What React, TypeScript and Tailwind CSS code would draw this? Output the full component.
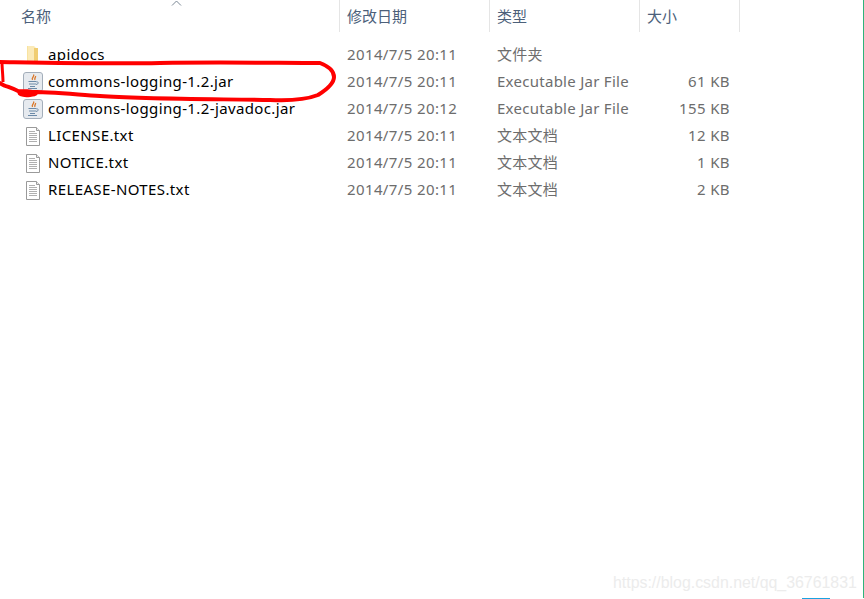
const files = [
  { name: "apidocs", date: "2014/7/5 20:11", type: "文件夹", size: "", icon: "folder" },
  { name: "commons-logging-1.2.jar", date: "2014/7/5 20:11", type: "Executable Jar File", size: "61 KB", icon: "jar" },
  { name: "commons-logging-1.2-javadoc.jar", date: "2014/7/5 20:12", type: "Executable Jar File", size: "155 KB", icon: "jar" },
  { name: "LICENSE.txt", date: "2014/7/5 20:11", type: "文本文档", size: "12 KB", icon: "txt" },
  { name: "NOTICE.txt", date: "2014/7/5 20:11", type: "文本文档", size: "1 KB", icon: "txt" },
  { name: "RELEASE-NOTES.txt", date: "2014/7/5 20:11", type: "文本文档", size: "2 KB", icon: "txt" },
];

function FileIcon({ kind }: { kind: string }) {
  if (kind === "folder") {
    return (
      <svg width="20" height="20" viewBox="0 0 20 20">
        <path d="M4 1h6v15H4z" fill="#f8e3a0" />
        <path d="M5 1h6l2 2v13H5z" fill="#fbeab8" />
        <path d="M11 3h4v13h-4z" fill="#f0cd72" />
      </svg>
    );
  }
  if (kind === "jar") {
    return (
      <svg width="20" height="20" viewBox="0 0 20 20">
        <rect x="0.500" y="0.500" width="19" height="19" rx="2.500" fill="#e6eaef" stroke="#a3aeba" />
        <path d="M10.500 2.500c1.500 2-2.500 3-1 5.500M12.500 4c.5 1.500-1.500 2-.5 4" fill="none" stroke="#d9772a" strokeWidth="1.300" />
        <path d="M5.500 9.500h8M6 12h7M7 14.500h5" stroke="#6b8aa8" strokeWidth="1.200" />
        <path d="M13.500 10c2.500-.5 2.500 2-.5 2.500M5 16.500h9" fill="none" stroke="#6b8aa8" strokeWidth="1" />
      </svg>
    );
  }
  return (
    <svg width="20" height="20" viewBox="0 0 20 20">
      <path d="M3.500 1.500h10l3 3v15h-13z" fill="#fff" stroke="#9a9a9a" />
      <path d="M13.500 1.500v3h3" fill="#eee" stroke="#9a9a9a" />
      <path d="M6 5.500h6M6 7.500h8M6 9.500h8M6 11.500h8M6 13.500h8M6 15.500h8" stroke="#b0b0b0" />
    </svg>
  );
}

// latin text runs a bit wider in the screenshot, cjk does not
function Label({ text }: { text: string }) {
  return <span className={/[a-z0-9]/i.test(text) ? "whitespace-nowrap tracking-[0.38px]" : "whitespace-nowrap"}>{text}</span>;
}

export default function App() {
  return (
    <div
      className="relative h-[599px] w-[864px] overflow-hidden bg-white text-[15px]"
      style={{ fontFamily: '"Noto Sans", "Noto Sans CJK SC", sans-serif' }}
    >
      {/* column headers */}
      <div className="flex h-8 w-[740px] text-[#4c607a]">
        <div className="relative flex w-[340px] items-center border-r border-[#e5e5e5] pl-[21px]">
          名称
          <svg className="absolute left-[171px] top-0" width="11" height="6" viewBox="0 0 11 6">
            <path d="M1 5.500 5.500 1 10 5.500" fill="none" stroke="#7b8794" />
          </svg>
        </div>
        <div className="flex w-[150px] items-center border-r border-[#e5e5e5] pl-[7px]">修改日期</div>
        <div className="flex w-[150px] items-center border-r border-[#e5e5e5] pl-[7px]">类型</div>
        <div className="flex w-[100px] items-center border-r border-[#e5e5e5] pl-[7px]">大小</div>
      </div>

      {/* file rows */}
      <div className="mt-[9px] w-[740px]">
        {files.map((f) => (
          <div key={f.name} className="flex h-[27px] items-center">
            <div className="flex w-[340px] items-center text-black">
              <div className="ml-[23px] mr-[5px] flex w-5 justify-center">
                <FileIcon kind={f.icon} />
              </div>
              <Label text={f.name} />
            </div>
            <div className="w-[150px] pl-[7px] text-[#6d6d6d]"><Label text={f.date} /></div>
            <div className="w-[150px] pl-[7px] text-[#6d6d6d]">
              <span className="whitespace-nowrap tracking-[0.27px]">{f.type}</span>
            </div>
            <div className="w-[90px] text-right text-[#6d6d6d]"><Label text={f.size} /></div>
          </div>
        ))}
      </div>

      {/* red marker scribble */}
      <svg className="pointer-events-none absolute left-0 top-0" width="864" height="120" viewBox="0 0 864 120">
        <path
          d="M0 62C60 63 110 64 160 63C220 62 280 63 320 63C328 66 334 70 334 77C334 83 326 90 318 95C305 100 290 101 270 100C210 99 140 99 100 96C70 94 40 91 22 92C16 93 22 96 30 95C44 93 30 91 18 91C10 87 4 86 0 83"
          fill="none"
          stroke="#ff0000"
          strokeWidth="4"
          strokeLinecap="round"
          strokeLinejoin="round"
        />
        <path d="M2 62C2 68 3 76 3 82" fill="none" stroke="#ff0000" strokeWidth="3" />
      </svg>

      {/* watermark */}
      <div
        className="absolute left-[613px] top-[571px] whitespace-nowrap text-[15.900px] text-[#ececec]"
        style={{ fontFamily: '"Liberation Sans", sans-serif' }}
      >
        https://blog.csdn.net/qq_36761831
      </div>
      <div className="absolute bottom-0 left-[802px] h-px w-7 bg-[#1aa3e0]" />
      <div className="absolute bottom-px right-0 top-0 w-px bg-[#2fb37a]" />
    </div>
  );
}
